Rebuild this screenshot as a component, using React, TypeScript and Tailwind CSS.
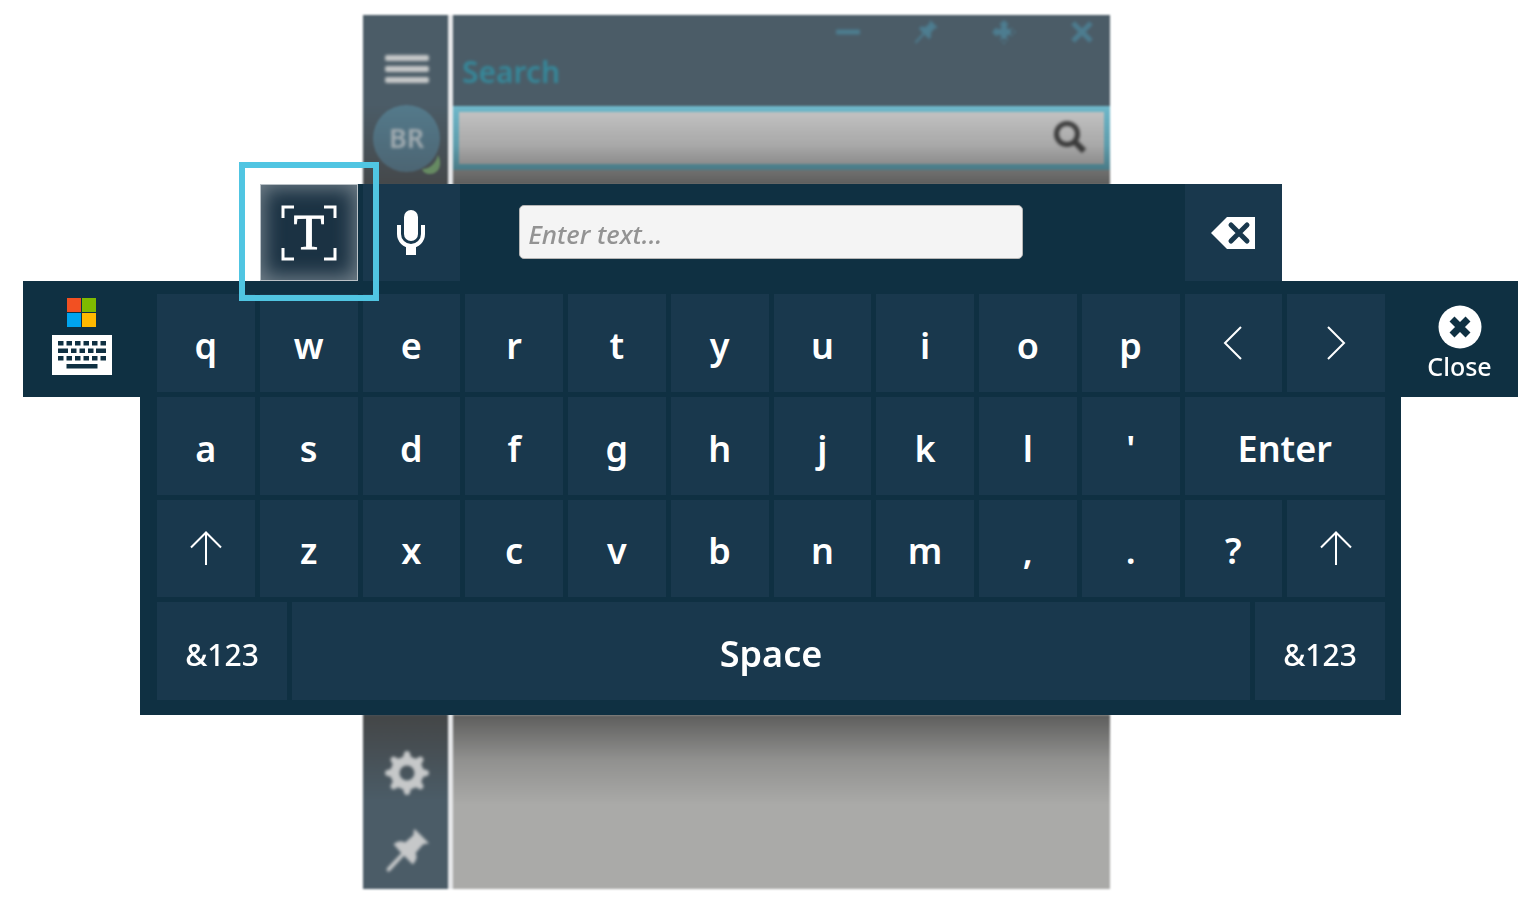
import type { ReactNode } from "react";
import clsx from "clsx";

type KeyDef = {
  label: string;
  icon?: ReactNode;
  wide?: boolean;
};

function ChevronIcon({ flip = false }: { flip?: boolean }) {
  return (
    <svg className={clsx("h-9 w-5", flip && "rotate-180")} viewBox="0 0 20 36" fill="none">
      <path d="M18 2 2 18l16 16" stroke="white" strokeWidth={2} />
    </svg>
  );
}

function ShiftIcon() {
  return (
    <svg className="h-9 w-8" viewBox="0 0 32 36" fill="none">
      <path d="M16 35V2M1 17.500 16 2.500l15 15" stroke="white" strokeWidth={2} />
    </svg>
  );
}

function PinIcon({ className }: { className?: string }) {
  return (
    <svg className={className} viewBox="0 0 46 46" fill="currentColor">
      <path d="M31 0 46 15C43 16 41 15 39 17L32 25C34 29 33 33 29 37L20 28 6 43Q1 47 2 41L17 25 9 16C13 12 17 12 21 14L29 7C31 5 29 2 31 0Z" />
    </svg>
  );
}

function GearIcon() {
  return (
    <svg className="size-11" viewBox="-22 -22 44 44" fill="none" stroke="currentColor">
      <circle r={12} strokeWidth={9} />
      {[0, 45, 90, 135, 180, 225, 270, 315].map((angle) => (
        <path
          key={angle}
          d="M-5-13-2.500-21Q0-23 2.500-21L5-13Z"
          fill="currentColor"
          stroke="none"
          transform={`rotate(${angle})`}
        />
      ))}
    </svg>
  );
}

function TextScanIcon() {
  return (
    <svg className="size-14" viewBox="0 0 56 56" fill="none">
      <path
        d="M2 13V2h11M43 2h11v11M54 43v11H43M13 54H2V43"
        stroke="white"
        strokeWidth={3}
      />
      <text
        x={28}
        y={44}
        fontSize={50}
        textAnchor="middle"
        fill="white"
        stroke="white"
        strokeWidth={1}
        className="font-['Liberation_Serif',serif]"
      >
        T
      </text>
    </svg>
  );
}

function MicIcon() {
  return (
    <svg className="h-[46px] w-7" viewBox="0 0 28 46" fill="none">
      <rect x={7} y={0} width={14} height={31} rx={7} fill="white" />
      <path d="M2 15v9a12 12 0 0 0 24 0v-9" stroke="white" strokeWidth={4} />
      <path d="M9 36h10v9H9z" fill="white" />
    </svg>
  );
}

function BackspaceIcon() {
  return (
    <svg className="h-[34px] w-11" viewBox="0 0 44 34" fill="none">
      <path d="M0 17 16 1h28v32H16z" fill="white" />
      <path
        d="m20 9 16 16M36 9 20 25"
        stroke="#19384d"
        strokeWidth={5}
        strokeLinecap="round"
      />
    </svg>
  );
}

function WindowsLogo() {
  return (
    <svg className="size-[29px]" viewBox="0 0 29 29">
      <path d="M0 0h14v14H0z" fill="#f25022" />
      <path d="M15 0h14v14H15z" fill="#7fba00" />
      <path d="M0 15h14v14H0z" fill="#00a4ef" />
      <path d="M15 15h14v14H15z" fill="#ffb900" />
    </svg>
  );
}

function KeyboardIcon() {
  return (
    <svg className="h-10 w-[60px]" viewBox="0 0 60 40">
      <path d="M0 0h60v40H0z" fill="white" />
      <g fill="#0f3042">
        {[6, 14.500, 23, 31.500, 40, 48.500].map((x) => (
          <g key={x}>
            <rect x={x} y={6} width={5.500} height={4.500} />
            <rect x={x} y={21} width={5.500} height={4.500} />
          </g>
        ))}
        <rect x={6} y={13.500} width={10} height={4.500} />
        {[19, 27.500, 36].map((x) => (
          <rect key={x} x={x} y={13.500} width={5.500} height={4.500} />
        ))}
        <rect x={44} y={13.500} width={10} height={4.500} />
        <rect x={14.500} y={29} width={31} height={4.500} />
      </g>
    </svg>
  );
}

function CloseIcon() {
  return (
    <svg className="size-11" viewBox="0 0 44 44" fill="none">
      <circle cx={22} cy={22} r={21.500} fill="white" />
      <path d="m14 14 16 16M30 14 14 30" stroke="#0f3042" strokeWidth={7} />
    </svg>
  );
}

const letters = (text: string): KeyDef[] => text.split("").map((label) => ({ label }));

const rows: KeyDef[][] = [
  [
    ...letters("qwertyuiop"),
    { label: "Cursor left", icon: <ChevronIcon /> },
    { label: "Cursor right", icon: <ChevronIcon flip /> },
  ],
  [...letters("asdfghjkl'"), { label: "Enter", wide: true }],
  [
    { label: "Left shift", icon: <ShiftIcon /> },
    ...letters("zxcvbnm,.?"),
    { label: "Right shift", icon: <ShiftIcon /> },
  ],
];

const keyStyle = "flex items-center justify-center bg-[#19384d] text-white hover:bg-[#23455d]";

function AppWindow() {
  return (
    <div className="col-start-1 row-start-1 mt-[15px] mr-[426px] mb-[9px] ml-[363px] flex bg-[#e6e7e9] blur-[1px]">
      {/* Sidebar */}
      <nav className="relative flex w-[85px] flex-col items-center bg-[#4b5c67] pt-10 pb-4 pl-0.5 text-[#c6c8c9]">
        <div className="absolute inset-x-0 top-[90px] h-20 bg-linear-to-b from-transparent to-[#444647]/90" />
        <div className="absolute inset-x-0 top-[700px] h-[85px] bg-linear-to-b from-[#444647] to-transparent" />
        <button aria-label="Menu" className="flex flex-col gap-[5px] blur-[1px]">
          <span className="h-1.5 w-11 rounded-xs bg-current" />
          <span className="h-1.5 w-11 rounded-xs bg-current" />
          <span className="h-1.5 w-11 rounded-xs bg-current" />
        </button>
        <div className="relative mt-[22px] flex size-[67px] items-center justify-center rounded-full bg-linear-to-b from-[#547a8b] to-[#4c6573]">
          <span className="text-[27px] font-semibold text-[#a3adb2] blur-[1px]">BR</span>
          <svg className="absolute -right-px -bottom-0.5 size-5" viewBox="0 0 20 20">
            <path d="M17 1C22 10 18 20 9 20C5 20 2 18 1 15C9 15 15 9 17 1Z" fill="#668a62" />
          </svg>
        </div>
        <div className="relative mt-auto flex flex-col gap-[34px] blur-[1px]">
          <button aria-label="Settings">
            <GearIcon />
          </button>
          <button aria-label="Pin">
            <PinIcon className="size-11" />
          </button>
        </div>
      </nav>

      {/* Search panel */}
      <section className="relative ml-[5px] flex-1 bg-[#aaaaa8]">
        <header className="h-[91px] bg-[#4b5c67]">
          <div className="flex h-[34px] items-center justify-end gap-[54px] pr-4 text-[#4d7d90] blur-[1px]">
            <button aria-label="Minimize">
              <svg className="size-6" viewBox="0 0 24 24" stroke="currentColor" strokeWidth={5}>
                <path d="M0 12h24" />
              </svg>
            </button>
            <button aria-label="Pin window">
              <PinIcon className="size-6" />
            </button>
            <button aria-label="Move">
              <svg className="size-6" viewBox="0 0 24 24" fill="currentColor">
                <path d="M9 2h6v20H9zM2 9h20v6H2zM12 0l5 5H7zM12 24l5-5H7zM0 12l5-5v10zM24 12l-5-5v10z" />
              </svg>
            </button>
            <button aria-label="Close window">
              <svg className="size-6" viewBox="0 0 24 24" stroke="currentColor" strokeWidth={5}>
                <path d="m3 3 18 18M21 3 3 21" />
              </svg>
            </button>
          </div>
          <h1 className="pl-[9px] text-[30px] leading-[46px] font-semibold text-[#36899b] blur-[1px]">
            Search
          </h1>
        </header>
        <div className="flex h-16 items-center border-6 border-[#6fb8ca] bg-[#c6c6c6]">
          <input aria-label="Search" className="h-full min-w-0 flex-1 px-3 text-2xl outline-none" />
          <button aria-label="Run search" className="pr-[18px] pb-0.5 blur-[1px]">
            <svg className="size-8 text-[#444]" viewBox="0 0 32 32" fill="none" stroke="currentColor">
              <circle cx={13} cy={13} r={10.500} strokeWidth={5} />
              <path d="m21 21 9 9" strokeWidth={6} />
            </svg>
          </button>
        </div>
        <div className="pointer-events-none absolute inset-x-0 top-[91px] h-[79px] bg-linear-to-b from-transparent via-black/15 to-black/45" />
        <div className="pointer-events-none absolute inset-x-0 top-[700px] h-[90px] bg-linear-to-b from-black/45 via-black/15 to-transparent" />
      </section>
    </div>
  );
}

function Toolbar() {
  return (
    <div className="relative z-10 grid grid-cols-12 gap-x-[5px] pr-[133px] pl-[134px]">
      <div className="col-span-10 col-start-2 grid h-[97px] grid-cols-subgrid bg-[#0f3042]">
        <div className="relative">
          <button
            aria-label="Scan text"
            className="flex size-full items-center justify-center border border-[#b9c1c6] bg-[#1b3243] shadow-[inset_0_0_20px_3px_#74828c]"
          >
            <TextScanIcon />
          </button>
          <div className="pointer-events-none absolute -inset-x-[21px] -top-[22px] -bottom-5 border-6 border-[#50c5e2]" />
        </div>
        <button aria-label="Dictate" className={keyStyle}>
          <MicIcon />
        </button>
        <div className="col-span-7 flex items-center pr-[157px] pb-0.5 pl-[54px]">
          <input
            aria-label="Text to enter"
            placeholder="Enter text..."
            className="h-[54px] w-full rounded-[5px] border border-[#b5b5b5] bg-[#f4f4f4] px-2 pt-1 text-[26px] font-medium text-[#333] italic outline-none placeholder:text-[#939393]"
          />
        </div>
        <button aria-label="Backspace" className={keyStyle}>
          <BackspaceIcon />
        </button>
      </div>
    </div>
  );
}

function Keyboard() {
  return (
    <div className="relative col-start-1 row-start-1 self-start pt-[184px] pr-[18px] pl-[23px]">
      <Toolbar />
      <div className="flex items-start">
        <button
          aria-label="Windows keyboard"
          className="flex h-[116px] w-[117px] flex-col items-center gap-2 bg-[#0f3042] pt-[17px]"
        >
          <WindowsLogo />
          <KeyboardIcon />
        </button>

        <div className="flex h-[434px] flex-1 flex-col gap-[5px] bg-[#0f3042] pt-[13px] pr-4 pb-[15px] pl-[17px]">
          {rows.map((row) => (
            <div key={row[0].label} className="grid flex-1 grid-cols-12 gap-[5px]">
              {row.map((item) => (
                <button
                  key={item.label}
                  aria-label={item.icon ? item.label : undefined}
                  className={clsx(
                    keyStyle,
                    "text-4xl font-semibold",
                    item.wide && "col-span-2",
                    !item.icon && "pt-1.5"
                  )}
                >
                  {item.icon ?? item.label}
                </button>
              ))}
            </div>
          ))}
          <div className="flex flex-1 gap-[5px]">
            <button className={clsx(keyStyle, "w-[130px] pt-1.5 text-[30px] font-medium")}>
              &amp;123
            </button>
            <button className={clsx(keyStyle, "flex-1 pt-1.5 text-4xl font-semibold")}>Space</button>
            <button className={clsx(keyStyle, "w-[130px] pt-1.5 text-[30px] font-medium")}>
              &amp;123
            </button>
          </div>
        </div>

        <button className="flex h-[116px] w-[117px] flex-col items-center bg-[#0f3042] pt-6 text-[25px] leading-[34px] font-medium text-white">
          <CloseIcon />
          Close
        </button>
      </div>
    </div>
  );
}

export default function App() {
  return (
    <main className="grid min-h-screen bg-white font-['Noto_Sans','Open_Sans',sans-serif]">
      <AppWindow />
      <Keyboard />
    </main>
  );
}
